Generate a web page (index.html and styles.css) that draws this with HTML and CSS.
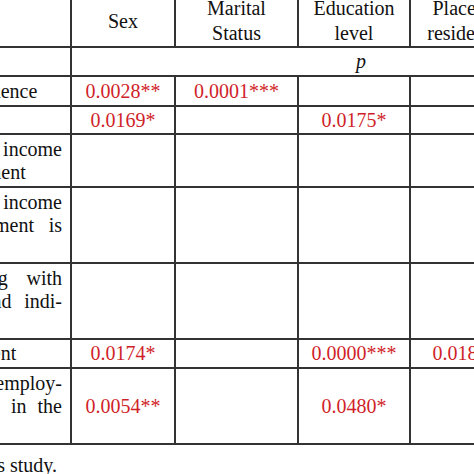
FILE: index.html
```html
<!DOCTYPE html>
<html lang="en">
<head>
<meta charset="utf-8">
<title>Table</title>
<link rel="stylesheet" href="styles.css">
</head>
<body>
<div class="sheet">
  <table class="tbl">
    <colgroup>
      <col class="c-var">
      <col class="c-sex">
      <col class="c-mar">
      <col class="c-edu">
      <col class="c-pla">
      <col class="c-age">
    </colgroup>
    <tr class="head">
      <td class="var">Variables</td>
      <td>Sex</td>
      <td>Marital<br>Status</td>
      <td>Education<br>level</td>
      <td>Place of<br>residence</td>
      <td>Age<br>group</td>
    </tr>
    <tr class="h29">
      <td class="var"></td>
      <td colspan="5"><i>p</i></td>
    </tr>
    <tr class="h30">
      <td class="var">Financial independence</td>
      <td class="sig">0.0028**</td>
      <td class="sig">0.0001***</td>
      <td></td>
      <td></td>
      <td></td>
    </tr>
    <tr class="h28">
      <td class="var">Having children</td>
      <td class="sig">0.0169*</td>
      <td></td>
      <td class="sig">0.0175*</td>
      <td></td>
      <td></td>
    </tr>
    <tr class="h53">
      <td class="var"><div class="jl">Level of monthly income</div><div>from any employment</div></td>
      <td></td><td></td><td></td><td></td><td></td>
    </tr>
    <tr class="h76">
      <td class="var"><div class="jl">Perceived level of income</div><div class="jl">the sole employment is</div><div>sufficient</div></td>
      <td></td><td></td><td></td><td></td><td></td>
    </tr>
    <tr class="h76">
      <td class="var"><div class="jl">Residence sharing with</div><div class="jl">other relatives and indi-</div><div>viduals</div></td>
      <td></td><td></td><td></td><td></td><td></td>
    </tr>
    <tr class="h29">
      <td class="var">Regular employment</td>
      <td class="sig">0.0174*</td>
      <td></td>
      <td class="sig">0.0000***</td>
      <td class="sig">0.0181*</td>
      <td></td>
    </tr>
    <tr class="h76">
      <td class="var"><div class="jl">Experience of unemploy-</div><div class="jl">ment of a person in the</div><div>household</div></td>
      <td class="sig">0.0054**</td>
      <td></td>
      <td class="sig">0.0480*</td>
      <td></td>
      <td></td>
    </tr>
  </table>
  <p class="note">Factors tested in this study.</p>
</div>
</body>
</html>
```

FILE: styles.css
```css
html, body {
  margin: 0;
  padding: 0;
  background: #ffffff;
}

body {
  width: 474px;
  height: 474px;
  overflow: hidden;
  font-family: "Liberation Serif", "Times New Roman", serif;
  color: #111111;
}

.sheet {
  width: 810px;
  margin-left: -160px;
  margin-top: -10px;
}

.tbl {
  border-collapse: collapse;
  table-layout: fixed;
  width: 810px;
  font-family: "Liberation Serif", "Times New Roman", serif;
  font-size: 20px;
  line-height: 23px;
}

.c-var { width: 230px; }
.c-sex { width: 104px; }
.c-mar { width: 123px; }
.c-edu { width: 112px; }
.c-pla { width: 110px; }
.c-age { width: 131px; }

.tbl td {
  border: 2px solid #333333;
  padding: 0 7px;
  text-align: center;
  vertical-align: middle;
}

.tbl td.var {
  text-align: left;
  padding: 0 8px 0 6px;
}

.head td {
  line-height: 25px;
  height: 48px;
  padding-top: 4px;
}

.h28 td { height: 26px; }
.h29 td { height: 27px; }
.h30 td { height: 28px; }
.h53 td { height: 51px; }
.h76 td { height: 74px; }

.jl {
  text-align: justify;
  text-align-last: justify;
}

.sig {
  color: #d01f2a;
}

.note {
  margin: 9px 0 0 0;
  font-family: "Liberation Serif", "Times New Roman", serif;
  font-size: 20px;
  line-height: 23px;
}
```
